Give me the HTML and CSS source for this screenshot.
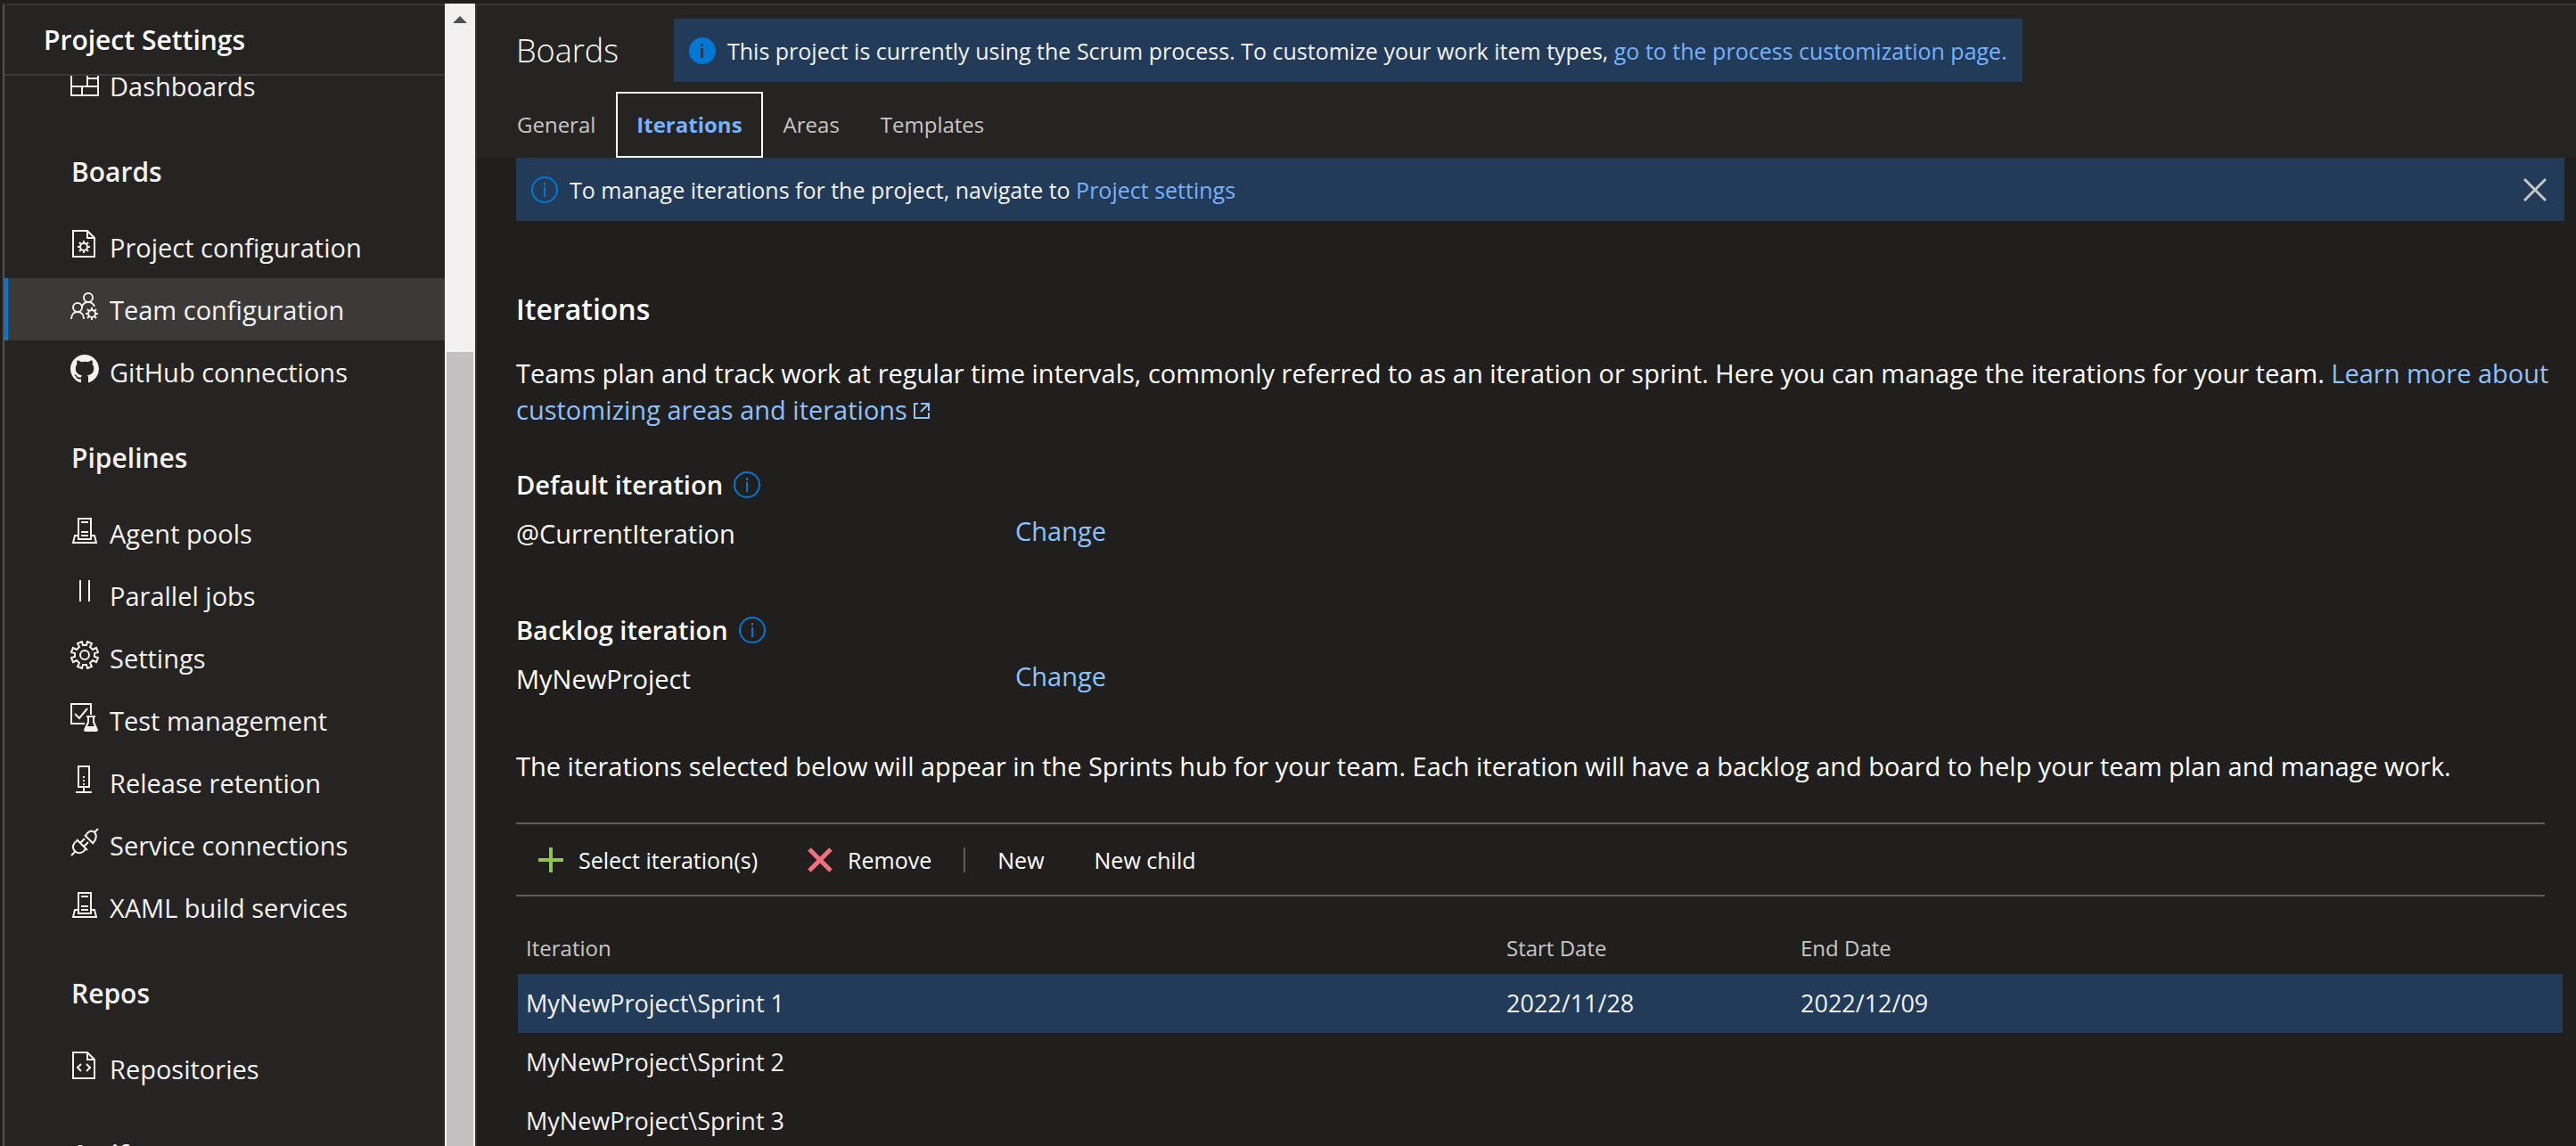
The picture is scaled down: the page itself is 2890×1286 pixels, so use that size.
FILE: index.html
```html
<!DOCTYPE html>
<html lang="en">
<head>
    <meta charset="UTF-8">
    <meta name="viewport" content="width=device-width, initial-scale=1.0">
    <title>Project Settings - Boards</title>
    <link rel="stylesheet" href="styles.css">
</head>
<body>
    <!-- Shared icons -->
    <svg class="sprite" aria-hidden="true">
        <symbol id="i-info" viewBox="0 0 30 30">
            <circle cx="15" cy="15" r="14" fill="none" stroke="currentColor" stroke-width="2"/>
            <path d="M14 7h2v3h-2zM14 12h2v11h-2z" fill="currentColor"/>
        </symbol>
        <symbol id="i-server" viewBox="0 0 32 32">
            <path d="M9 26V3h14v23zM12 7h8M12 18h8M12 22h8M8 22H5l-2 8h26l-2-8h-3" fill="none" stroke="currentColor" stroke-width="2"/>
        </symbol>
        <symbol id="i-page" viewBox="0 0 32 32">
            <path d="M3 1h16l8 8v21H3zM19 1v8h8" fill="none" stroke="currentColor" stroke-width="2"/>
        </symbol>
        <symbol id="i-cog" viewBox="0 0 16 16">
            <path d="M8 1v3M8 12v3M1 8h3M12 8h3M3 3l2 2M11 11l2 2M13 3l-2 2M5 11l-2 2" fill="none" stroke="currentColor" stroke-width="2"/>
            <circle cx="8" cy="8" r="4" fill="none" stroke="currentColor" stroke-width="2"/>
        </symbol>
    </svg>

    <div class="app">
        <aside class="sidebar">
            <h2 class="sidebar-title">Project Settings</h2>
            <nav class="nav">
                <div class="nav-list">
                    <a class="nav-item" href="#dashboards">
                        <svg class="icon" viewBox="0 0 32 32"><path d="M1 1h30v29H1zM19 1v18M1 20h30M13 20v10M19 11h12" fill="none" stroke="currentColor" stroke-width="2"/></svg>
                        Dashboards
                    </a>

                    <h3 class="nav-group">Boards</h3>
                    <a class="nav-item" href="#project-configuration">
                        <svg class="icon" viewBox="0 0 32 32"><use href="#i-page"/><use href="#i-cog" x="7" y="11" width="16" height="16"/></svg>
                        Project configuration
                    </a>
                    <a class="nav-item active" href="#team-configuration">
                        <svg class="icon" viewBox="0 0 32 32"><g fill="none" stroke="currentColor" stroke-width="2"><circle cx="20" cy="6" r="5"/><circle cx="8" cy="17" r="5"/><path d="M1 30c0-5 3-8 7-8s7 3 7 8M13 16c1-3 4-5 7-5s6 2 7 5"/></g><use href="#i-cog" x="16" y="16" width="16" height="16"/></svg>
                        Team configuration
                    </a>
                    <a class="nav-item" href="#github-connections">
                        <svg class="icon" viewBox="0 0 16 16"><path fill="currentColor" d="M8 0C3.58 0 0 3.58 0 8c0 3.54 2.29 6.53 5.47 7.59.4.07.55-.17.55-.38 0-.19-.01-.82-.01-1.49-2.01.37-2.53-.49-2.69-.94-.09-.23-.48-.94-.82-1.13-.28-.15-.68-.52-.01-.53.63-.01 1.08.58 1.23.82.72 1.21 1.87.87 2.33.66.07-.52.28-.87.51-1.07-1.78-.2-3.64-.89-3.64-3.95 0-.87.31-1.59.82-2.15-.08-.2-.36-1.02.08-2.12 0 0 .67-.21 2.2.82.64-.18 1.32-.27 2-.27s1.36.09 2 .27c1.53-1.04 2.2-.82 2.2-.82.44 1.1.16 1.92.08 2.12.51.56.82 1.27.82 2.15 0 3.07-1.87 3.75-3.65 3.95.29.25.54.73.54 1.48 0 1.07-.01 1.93-.01 2.2 0 .21.15.46.55.38A8.01 8.01 0 0 0 16 8c0-4.42-3.58-8-8-8z"/></svg>
                        GitHub connections
                    </a>

                    <h3 class="nav-group">Pipelines</h3>
                    <a class="nav-item" href="#agent-pools">
                        <svg class="icon"><use href="#i-server"/></svg>
                        Agent pools
                    </a>
                    <a class="nav-item" href="#parallel-jobs">
                        <svg class="icon" viewBox="0 0 32 32"><path d="M11 2v24M21 2v24" fill="none" stroke="currentColor" stroke-width="2"/></svg>
                        Parallel jobs
                    </a>
                    <a class="nav-item" href="#settings">
                        <svg class="icon" viewBox="0 0 32 32"><g fill="none" stroke="currentColor" stroke-width="2"><circle cx="16" cy="16" r="5"/><path d="M13 1l1 4h4l1-4 5 2-2 4 3 3 4-2 2 5-4 1v4l4 1-2 5-4-2-3 3 2 4-5 2-1-4h-4l-1 4-5-2 2-4-3-3-4 2-2-5 4-1v-4l-4-1 2-5 4 2 3-3-2-4z"/></g></svg>
                        Settings
                    </a>
                    <a class="nav-item" href="#test-management">
                        <svg class="icon" viewBox="0 0 32 32"><path d="M16 23H1V1h22v12M5 12l5 5 9-11" fill="none" stroke="currentColor" stroke-width="2"/><path d="M18 14h10v2h-1v5l4 9q0 2-2 2H17q-2 0-2-2l4-9v-5h-1zm3 2v6l-2 4h8l-2-4v-6z" fill="currentColor" fill-rule="evenodd"/></svg>
                        Test management
                    </a>
                    <a class="nav-item" href="#release-retention">
                        <svg class="icon" viewBox="0 0 32 32"><path d="M9 1h12v23H9zM15 25v5M6 30h18" fill="none" stroke="currentColor" stroke-width="2"/><path d="M14 12h2v2h-2zM14 16h2v2h-2zM14 20h2v2h-2z" fill="currentColor"/></svg>
                        Release retention
                    </a>
                    <a class="nav-item" href="#service-connections">
                        <svg class="icon" viewBox="0 0 32 32"><path d="M27 5l4-4M16 8l10 10M17 9c2-5 7-7 10-4s2 9-2 12M5 27l-4 4M7 13l12 12M8 14c-5 3-7 8-3 12s10 2 12-3M11 17l5-5M15 21l5-5" fill="none" stroke="currentColor" stroke-width="2"/></svg>
                        Service connections
                    </a>
                    <a class="nav-item" href="#xaml-build-services">
                        <svg class="icon"><use href="#i-server"/></svg>
                        XAML build services
                    </a>

                    <h3 class="nav-group">Repos</h3>
                    <a class="nav-item" href="#repositories">
                        <svg class="icon" viewBox="0 0 32 32"><use href="#i-page"/><path d="M12 14l-4 4 4 4M18 14l4 4-4 4" fill="none" stroke="currentColor" stroke-width="2"/></svg>
                        Repositories
                    </a>

                    <h3 class="nav-group">Artifacts</h3>
                </div>
            </nav>
        </aside>

        <div class="scrollbar" aria-hidden="true">
            <svg class="scroll-arrow" viewBox="0 0 16 8"><path d="M0 8l8-8 8 8z" fill="currentColor"/></svg>
            <div class="scroll-thumb"></div>
        </div>

        <main class="main">
            <header class="page-header">
                <div class="title-row">
                    <h1>Boards</h1>
                    <div class="message">
                        <svg class="info" viewBox="0 0 30 30"><circle cx="15" cy="15" r="15" fill="currentColor"/><path d="M13 7h3v3h-3zM13 12h3v11h-3z" fill="#223b59"/></svg>
                        <p>This project is currently using the Scrum process. To customize your work item types, <a href="#process">go to the process customization page.</a></p>
                    </div>
                </div>
                <nav class="tabs">
                    <a class="tab" href="#general">General</a>
                    <a class="tab selected" href="#iterations">Iterations</a>
                    <a class="tab" href="#areas">Areas</a>
                    <a class="tab" href="#templates">Templates</a>
                </nav>
            </header>

            <div class="content">
                <div class="message">
                    <svg class="info"><use href="#i-info"/></svg>
                    <p>To manage iterations for the project, navigate to <a href="#project-settings">Project settings</a></p>
                    <button class="close" type="button" aria-label="Close">
                        <svg viewBox="0 0 26 26"><path d="M1 1l24 24M25 1L1 25" fill="none" stroke="currentColor" stroke-width="3"/></svg>
                    </button>
                </div>

                <h2>Iterations</h2>
                <p class="intro">Teams plan and track work at regular time intervals, commonly referred to as an iteration or sprint. Here you can manage the iterations for your team. <a href="#learn">Learn more about customizing areas and iterations<svg class="external" viewBox="0 0 20 20"><path d="M6 2H2v16h16v-6M9 2h9v8M18 2l-9 9" fill="none" stroke="currentColor" stroke-width="2"/></svg></a></p>

                <section class="setting">
                    <h3>Default iteration <svg class="info"><use href="#i-info"/></svg></h3>
                    <div class="setting-value">
                        <span>@CurrentIteration</span>
                        <a href="#change-default">Change</a>
                    </div>
                </section>
                <section class="setting">
                    <h3>Backlog iteration <svg class="info"><use href="#i-info"/></svg></h3>
                    <div class="setting-value">
                        <span>MyNewProject</span>
                        <a href="#change-backlog">Change</a>
                    </div>
                </section>

                <p class="hint">The iterations selected below will appear in the Sprints hub for your team. Each iteration will have a backlog and board to help your team plan and manage work.</p>

                <div class="toolbar">
                    <button type="button">
                        <svg class="add" viewBox="0 0 28 28"><path d="M14 0v28M0 14h28" fill="none" stroke="currentColor" stroke-width="4"/></svg>
                        Select iteration(s)
                    </button>
                    <button type="button">
                        <svg class="remove" viewBox="0 0 28 28"><path d="M2 2l24 24M26 2L2 26" fill="none" stroke="currentColor" stroke-width="5"/></svg>
                        Remove
                    </button>
                    <span class="separator"></span>
                    <button type="button">New</button>
                    <button type="button">New child</button>
                </div>

                <table class="iterations">
                    <thead>
                        <tr>
                            <th class="col-name">Iteration</th>
                            <th class="col-start">Start Date</th>
                            <th>End Date</th>
                        </tr>
                    </thead>
                    <tbody>
                        <tr class="selected">
                            <td>MyNewProject\Sprint 1</td>
                            <td>2022/11/28</td>
                            <td>2022/12/09</td>
                        </tr>
                        <tr>
                            <td>MyNewProject\Sprint 2</td>
                            <td></td>
                            <td></td>
                        </tr>
                        <tr>
                            <td>MyNewProject\Sprint 3</td>
                            <td></td>
                            <td></td>
                        </tr>
                    </tbody>
                </table>
            </div>
        </main>
    </div>
</body>
</html>
```
FILE: styles.css
```css
* {
    box-sizing: border-box;
}

body {
    margin: 0;
    height: 100vh;
    overflow: hidden;
    font-family: 'Segoe UI', 'Open Sans', 'Noto Sans', sans-serif;
    font-size: 29px;
    line-height: 40px;
    background-color: #201f1e;
    color: #fff;
}

h1, h2, h3, p {
    margin: 0;
}

a {
    color: #8ec2ff;
    text-decoration: none;
}

button {
    padding: 0;
    border: none;
    background: none;
    color: inherit;
    font: inherit;
    cursor: pointer;
}

.sprite {
    display: none;
}

.app {
    display: flex;
    height: 100%;
    padding-top: 4px;
}

/* Sidebar */
.sidebar {
    display: flex;
    flex-direction: column;
    width: 496px;
    margin-left: 3px;
    border-left: 2px solid #555453;
    border-top: 2px solid #363534;
    background-color: #252423;
}

.sidebar-title {
    flex: none;
    height: 79px;
    padding: 19px 44px;
    border-bottom: 2px solid #3b3a39;
    font-size: 30px;
    font-weight: 600;
}

.nav {
    flex: 1;
    min-height: 0;
    overflow: hidden;
    color: #f3f2f1;
}

/* list is scrolled down a little under the title */
.nav-list {
    margin-top: -24px;
}

.nav-item {
    display: flex;
    align-items: center;
    gap: 12px;
    height: 70px;
    padding: 2px 0 0 74px;
    color: inherit;
}

.nav-item.active {
    padding-left: 70px;
    border-left: 4px solid #0078d4;
    background-color: #3b3a39;
}

.nav-group {
    height: 111px;
    padding: 42px 75px 0;
    font-size: 30px;
    font-weight: 600;
}

.icon {
    flex: none;
    width: 32px;
    height: 32px;
    margin-bottom: 8px;
}

/* Scrollbar */
.scrollbar {
    width: 34px;
    padding: 14px 2px 0;
    overflow: hidden;
    background-color: #f1f1f1;
}

.scroll-arrow {
    display: block;
    width: 16px;
    height: 8px;
    margin: 0 auto;
    color: #505050;
}

.scroll-thumb {
    height: 100%;
    margin-top: 369px;
    background-color: #c1c1c1;
}

/* Main area */
.main {
    flex: 1;
    min-width: 0;
    border-left: 2px solid #363534;
    border-top: 2px solid #363534;
}

.page-header {
    padding: 15px 44px 0;
    background-color: #252423;
}

.title-row {
    display: flex;
    align-items: center;
    gap: 62px;
}

h1 {
    font-size: 36px;
    font-weight: 300;
}

.message {
    display: flex;
    align-items: center;
    gap: 13px;
    height: 71px;
    padding: 0 17px;
    background-color: #223b59;
    color: #f3f2f1;
    font-size: 25px;
}

.message a {
    color: #75b2ff;
}

.info {
    flex: none;
    width: 30px;
    height: 30px;
    color: #0078d4;
}

.close {
    margin-left: auto;
    padding: 0 3px;
    color: #c8c6c4;
}

.close svg {
    display: block;
    width: 26px;
    height: 26px;
}

.tabs {
    display: flex;
    margin: 11px 0 0 -22px;
    font-size: 24px;
}

.tab {
    padding: 15px 21px;
    border: 2px solid transparent;
    color: #c8c6c4;
}

.tab.selected {
    border-color: #fff;
    color: #75b2ff;
    font-weight: 700;
}

.content {
    padding: 0 13px 0 44px;
}

.content h2 {
    margin: 79px 0 31px;
    font-size: 32px;
    font-weight: 600;
}

.intro {
    margin-bottom: 44px;
    line-height: 41px;
}

.external {
    width: 20px;
    height: 20px;
    margin-left: 6px;
}

.setting + .setting {
    margin-top: 68px;
}

.setting h3 {
    display: flex;
    align-items: center;
    gap: 12px;
    margin-bottom: 15px;
    font-size: 29px;
    font-weight: 600;
}

.setting-value {
    display: flex;
}

.setting-value span {
    width: 560px;
}

.setting-value a {
    line-height: 34px;
}

.hint {
    margin: 58px 0 43px;
}

.toolbar {
    display: flex;
    align-items: center;
    gap: 56px;
    height: 83px;
    margin-right: 22px;
    padding-left: 25px;
    border-top: 2px solid #605e5c;
    border-bottom: 2px solid #605e5c;
    font-size: 25px;
}

.toolbar button {
    display: flex;
    align-items: center;
    gap: 17px;
}

.toolbar svg {
    width: 28px;
    height: 28px;
}

.add {
    color: #92c353;
}

.remove {
    color: #f1707b;
}

.separator {
    width: 2px;
    height: 28px;
    margin: 0 -20px;
    background-color: #605e5c;
}

/* Iterations table */
.iterations {
    width: 100%;
    margin-top: 29px;
    padding: 0 2px;
    border-collapse: separate;
    border-spacing: 0;
    table-layout: fixed;
}

th, td {
    padding: 0 9px;
    text-align: left;
}

th {
    height: 58px;
    color: #c8c6c4;
    font-size: 24px;
    font-weight: 400;
}

td {
    height: 66px;
    color: #f3f2f1;
    font-size: 27px;
}

.col-name {
    width: 1100px;
}

.col-start {
    width: 330px;
}

.iterations .selected td {
    background-color: #223b59;
}
```
